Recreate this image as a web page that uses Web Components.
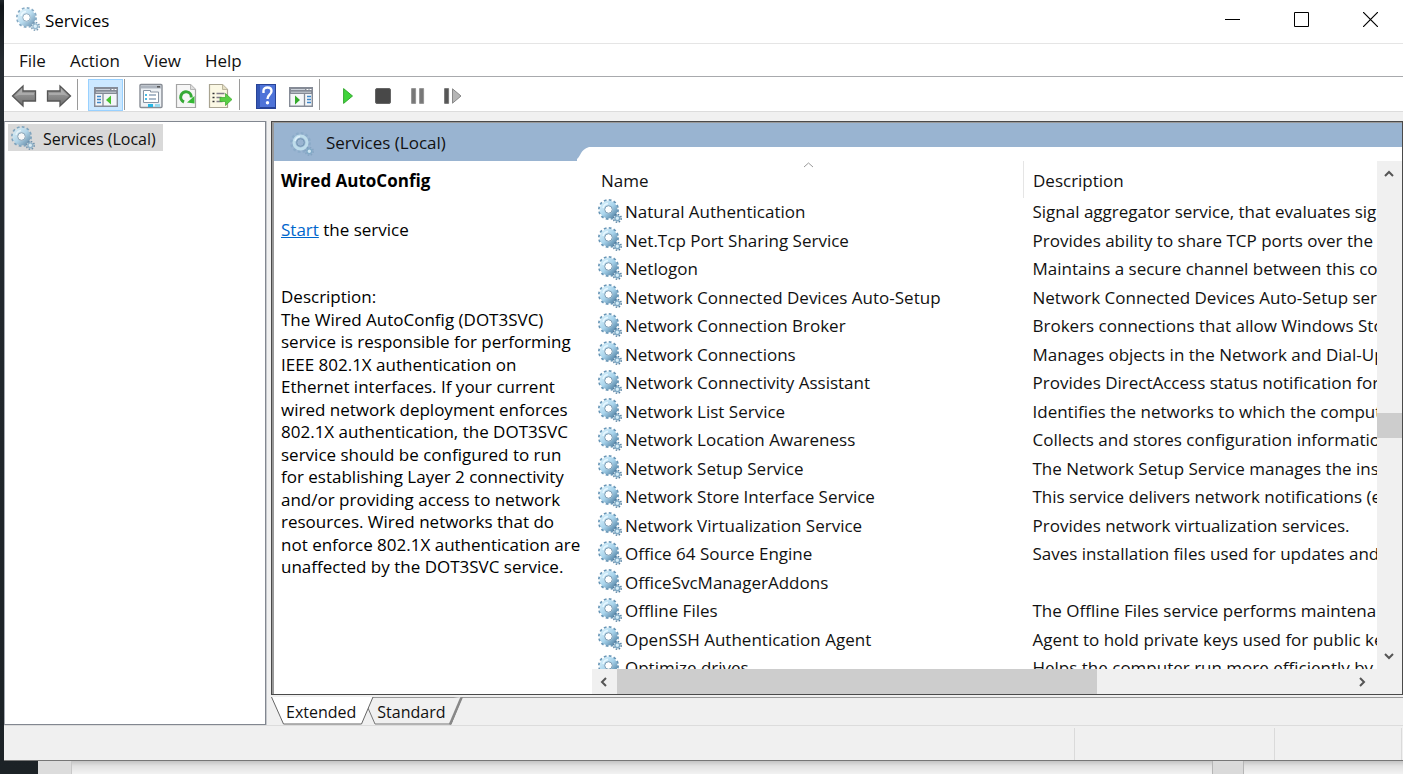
<!DOCTYPE html>
<html lang="en">
<head>
<meta charset="utf-8">
<title>Services</title>
<style>
html, body { margin: 0; height: 100%; }
body { font-family: "Open Sans", "Noto Sans", sans-serif; font-size: 17px; line-height: 22px; color: #111; overflow: hidden; }
</style>
</head>
<body>
<services-desktop></services-desktop>

<template id="t-desktop">
<style>
:host { display: flex; flex-direction: column; height: 100vh; padding-left: 4px; box-sizing: border-box; background: linear-gradient(#20262b, #101518 6px, #252b31 60px, #1c2226); }
services-window { flex: 1; min-height: 0; }
.behind { display: flex; height: 13px; margin-left: 34px; background: linear-gradient(#c4c4c4, #e2e2e2 5px, #f2f2f2); }
.a { width: 33px; border-right: 1px solid #c8c8c8; background: #dcdcdc; }
.b { flex: 1; }
.c { width: 30px; border: solid #b5b5b5; border-width: 0 1px; background: #dadada; }
.d { width: 159px; }
</style>
<services-window></services-window>
<div class="behind"><div class="a"></div><div class="b"></div><div class="c"></div><div class="d"></div></div>
</template>

<template id="t-window">
<style>
:host { display: flex; flex-direction: column; background: #f0f0f0; border-bottom: 1px solid #777; }
.body { flex: 1; min-height: 0; display: flex; gap: 4px; padding-top: 9px; }
console-tree { width: 262px; flex: none; }
.right { flex: 1; min-width: 0; display: flex; flex-direction: column; }
services-view { flex: 1; min-height: 0; }
</style>
<title-bar>Services</title-bar>
<menu-bar></menu-bar>
<tool-bar></tool-bar>
<div class="body">
<console-tree>Services (Local)</console-tree>
<div class="right"><services-view></services-view><view-tabs></view-tabs></div>
</div>
<status-bar></status-bar>
</template>

<template id="t-title">
<style>
:host { display: flex; align-items: center; height: 43px; background: #fff; border-bottom: 1px solid #e5e5e5; padding-left: 12px; color: #000; }
gear-icon { margin-bottom: 5px; }
h1 { flex: 1; margin: 0 0 2px 5px; font: inherit; }
button { width: 70px; height: 40px; padding: 0; border: 0; background: none; display: grid; place-items: center; margin-bottom: 4px; }
svg { display: block; stroke: #000; fill: none; }
.close { width: 66px; margin-left: 2px; }
.max { width: 68px; }
</style>
<gear-icon tone="light"></gear-icon>
<h1><slot></slot></h1>
<button aria-label="Minimize"><svg width="15" height="15"><path d="M0 7.500h15"/></svg></button>
<button class="max" aria-label="Maximize"><svg width="15" height="15"><path d="M.5.500h14v14H.5z"/></svg></button>
<button class="close" aria-label="Close"><svg width="15" height="15"><path d="M0 0l15 15M15 0L0 15" stroke-width="1.200"/></svg></button>
</template>

<template id="t-menu">
<style>
:host { display: flex; height: 32px; gap: 24px; padding-left: 15px; align-items: center; background: #fff; border-bottom: 1px solid #a8aaad; }
button { border: 0; background: none; padding: 2px 0 0; font: inherit; color: inherit; height: 32px; }
</style>
<button>File</button><button>Action</button><button>View</button><button>Help</button>
</template>

<template id="t-tool">
<style>
:host { display: flex; height: 34px; padding-left: 2px; align-items: center; background: #fff; border-bottom: 1px solid #dcdcdc; }
button { width: 35px; height: 32px; border: 0; padding: 3px 0 0; background: none; display: grid; place-items: center; box-sizing: border-box; margin-top: 1px; }
button[aria-pressed=true] { background: #cce8ff; border: 1px solid #99d1ff; }
i { width: 1px; height: 31px; margin: 0 8px 0 1px; background: #9a9a9a; }
i.wide { margin-right: 10px; }
svg { display: block; }
</style>
<button aria-label="Back"><svg width="26" height="24" viewBox="0 0 26 24"><path d="M1.500 12L12 2v5h12.500v10H12v5z" fill="url(#g)" stroke="#555" stroke-width="1.300"/><path d="M4 12l7-7v4h12v2H8z" fill="#bbb" opacity=".6"/><defs><linearGradient id="g" x2="0" y2="1"><stop stop-color="#aaa"/><stop offset="1" stop-color="#6c6c6c"/></linearGradient></defs></svg></button>
<button aria-label="Forward"><svg width="26" height="24" viewBox="0 0 26 24"><path d="M24.500 12L14 2v5H1.500v10H14v5z" fill="url(#h)" stroke="#555" stroke-width="1.300"/><path d="M22 12l-7-7v4H3v2h15z" fill="#bbb" opacity=".6"/><defs><linearGradient id="h" x2="0" y2="1"><stop stop-color="#aaa"/><stop offset="1" stop-color="#6c6c6c"/></linearGradient></defs></svg></button>
<i class="wide"></i>
<button aria-pressed="true" aria-label="Show or hide console tree"><svg width="24" height="22" viewBox="0 0 24 22"><path d="M.7 2.700h22.600v18.600H.7z" fill="#f4f6f8" stroke="#858b96" stroke-width="1.400"/><path d="M1 3h22v6H1z" fill="#858b96"/><path d="M2 4.500h14M2 7.200h20" stroke="#ccd2da"/><path d="M17.500 4.500h2M20.500 4.500h2" stroke="#fff"/><path d="M9 9v12" stroke="#858b96" stroke-width="1.300"/><path d="M3 11.500h4M3 14.500h4M3 17.500h4" stroke="#3d87c9" stroke-width="1.500"/><path d="M17 10.500v9l-5-4.500z" fill="#45c22f"/></svg></button>
<i></i>
<button aria-label="Properties"><svg width="24" height="26" viewBox="0 0 24 26"><rect x="1" y="1.500" width="22" height="23" rx="1" fill="#edf1f5" stroke="#878c94" stroke-width="1.400"/><path d="M2 4h20" stroke="#adb4be" stroke-width="3"/><path d="M18 3.800h3" stroke="#555" stroke-width="1.500"/><path d="M4.500 9V7.500h7V9h8v10.500h-15z" fill="#fff" stroke="#8793a2"/><path d="M6 12h2M6 16h2" stroke="#4bbae5" stroke-width="2"/><path d="M10 12h7M10 16h7" stroke="#8fa4ba" stroke-width="1.500"/><path d="M9 22.500h5" stroke="#26b7e5" stroke-width="3"/><path d="M16 22.500h5" stroke="#9ad8ed" stroke-width="3"/></svg></button>
<button aria-label="Refresh"><svg width="22" height="26" viewBox="0 0 22 26"><path d="M1.500 1.500h14l5 5v18h-19z" fill="#f6f6f6" stroke="#a4a4a4" stroke-width="1.200"/><path d="M15.500 1.500v5h5" fill="#ddd" stroke="#b7b7b7"/><path d="M9 19A5.300 5.300 0 1 1 16.300 14.500" fill="none" stroke="#35a935" stroke-width="3"/><path d="M12 19.500l7.500 1V13z" fill="#35b935"/></svg></button>
<button aria-label="Export list"><svg width="25" height="26" viewBox="0 0 25 26"><path d="M1.500 1.500h13l5 5v18h-18z" fill="#fbf8e4" stroke="#a9a491" stroke-width="1.200"/><path d="M14.500 1.500v5h5" fill="#e5dfc4" stroke="#bbb59d"/><path d="M4.500 10.500h2M4.500 14.500h2M4.500 18.500h2" stroke="#333" stroke-width="1.400"/><path d="M8.500 10.500h8M8.500 14.500h5M8.500 18.500h6" stroke="#817b88" stroke-width="1.300"/><path d="M12 14.500h5.500v-4L24 16.500l-6.500 6v-4H12z" fill="#59cf44" stroke="#39a82c" stroke-width=".7"/></svg></button>
<i></i>
<button aria-label="Help"><svg width="20" height="25" viewBox="0 0 20 25"><path d="M0 0h20v25H0z" fill="#274397"/><path d="M4 1h15v22H4z" fill="#4e73d8"/><path d="M1 1h3v23H1z" fill="#3457b6"/><path d="M7.500 9V6.500c0-4 8-4 8 .5 0 4-4 3.500-4 8" fill="none" stroke="#fff" stroke-width="2.400"/><circle cx="11.500" cy="18.800" r="1.700" fill="#fff"/></svg></button>
<button aria-label="Show or hide action pane"><svg width="24" height="22" viewBox="0 0 24 22"><path d="M.7 2.700h22.600v18.600H.7z" fill="#f4f6f8" stroke="#858b96" stroke-width="1.400"/><path d="M1 3h22v6H1z" fill="#858b96"/><path d="M2 4.500h14M2 7.200h20" stroke="#ccd2da"/><path d="M17.500 4.500h2M20.500 4.500h2" stroke="#fff"/><path d="M15.500 9v12" stroke="#858b96" stroke-width="1.300"/><path d="M18 11.500h4M18 14.500h4M18 17.500h4" stroke="#3d87c9" stroke-width="1.500"/><path d="M6 10.500v9l5-4.500z" fill="#35aa2b"/></svg></button>
<i class="wide"></i>
<button aria-label="Start service"><svg width="10" height="16" viewBox="0 0 10 16"><path d="M.6.600L9.500 8 .6 15.400z" fill="#3fd43a" stroke="#36a832"/></svg></button>
<button aria-label="Stop service"><svg width="16" height="16"><rect x=".5" y=".5" width="15" height="15" rx="1.500" fill="#484848" stroke="#666"/></svg></button>
<button aria-label="Pause service"><svg width="14" height="16"><path d="M.6.600h4v14.800h-4zM8.600.600h4v14.800h-4z" fill="#777" stroke="#949494"/></svg></button>
<button aria-label="Restart service"><svg width="18" height="16"><path d="M.6.600h4v14.800h-4z" fill="#555" stroke="#777"/><path d="M8.500.800L17 8l-8.500 7.200z" fill="#b5b5b5" stroke="#888"/></svg></button>
</template>

<template id="t-tree">
<style>
:host { display: block; background: #fff; border: 1px solid #828790; border-left-color: #a5a9b0; box-sizing: border-box; padding: 2px 3px; box-shadow: 1px 0 #c5c8cc; font-size: 16px; }
button { display: flex; align-items: center; height: 27px; width: 155px; border: 0; padding: 0 0 0 3px; background: #d9d9d9; font: inherit; color: inherit; white-space: nowrap; gap: 8px; }
div { display: flex; }
span { padding-top: 2px; }
</style>
<div role="tree"><button role="treeitem" aria-selected="true"><gear-icon tone="light"></gear-icon><span><slot></slot></span></button></div>
</template>

<template id="t-view">
<style>
:host { display: flex; flex-direction: column; background: #fff; border: 1px solid #4a4a4a; box-shadow: inset 2px 1px #999; padding: 1px 0 0 2px; margin-left: 1px; box-sizing: border-box; }
header { position: relative; display: flex; align-items: center; height: 38px; flex: none; padding-left: 16px; background: #99b4d1; gap: 12px; }
header svg { position: absolute; left: 303px; right: 0; bottom: 0; width: calc(100% - 303px); height: 14px; }
gear-icon { margin-top: 3px; }
h2 { font: inherit; margin: 2px 0 0; }
.panes { display: flex; flex: 1; min-height: 0; }
service-details { width: 318px; flex: none; }
service-list { flex: 1; min-width: 0; }
</style>
<header><gear-icon tone="pale"></gear-icon><h2>Services (Local)</h2><svg aria-hidden="true"><path d="M0 14V12C4 9 3 3 12 0H3000V14z" fill="#fff"/></svg></header>
<div class="panes"><service-details></service-details><service-list></service-list></div>
</template>

<template id="t-details">
<style>
:host { display: block; padding: 9px 0 0 7px; box-sizing: border-box; color: #000; white-space: nowrap; }
h3 { font-size: 17px; line-height: 22px; margin: 0; font-weight: 700; }
p { margin: 0; }
.start { margin: 27px 0 45px; }
a { color: #0066cc; text-decoration: underline; }
.text span { display: block; height: 22px; }
.text span:nth-child(odd) { height: 23px; }
</style>
<h3>Wired AutoConfig</h3>
<p class="start"><a href="#start">Start</a> the service</p>
<p class="text"><span>Description:</span><span>The Wired AutoConfig (DOT3SVC) </span><span>service is responsible for performing </span><span>IEEE 802.1X authentication on </span><span>Ethernet interfaces. If your current </span><span>wired network deployment enforces </span><span>802.1X authentication, the DOT3SVC </span><span>service should be configured to run </span><span>for establishing Layer 2 connectivity </span><span>and/or providing access to network </span><span>resources. Wired networks that do </span><span>not enforce 802.1X authentication are </span><span>unaffected by the DOT3SVC service.</span></p>
</template>

<template id="t-list">
<style>
:host { display: grid; grid-template: minmax(0, 1fr) 25px / minmax(0, 1fr) 25px; }
.rows { overflow: hidden; }
table { border-collapse: collapse; table-layout: fixed; width: 100%; }
th, td { padding: 0; text-align: left; font-weight: 400; white-space: nowrap; overflow: hidden; }
th { height: 34px; padding: 3px 0 0 9px; position: relative; }
th + th { border-left: 1px solid #e5e5e5; }
th svg { position: absolute; left: 211px; top: 1px; }
.name { width: 422px; }
td { height: 28px; }
tr:nth-child(even) td { height: 29px; }
td + td { padding-left: 9px; }
td div { display: flex; align-items: center; height: 28px; padding-left: 6px; gap: 3px; }
td gear-icon { margin-bottom: 3px; }
.v { grid-row: 1 / 3; grid-column: 2; display: flex; flex-direction: column; background: #f0f0f0; }
.h { display: flex; background: #f0f0f0; }
button { width: 25px; height: 25px; border: 0; padding: 0 2px 0 0; background: none; display: grid; place-items: center; flex: none; }
button svg { fill: none; stroke: #555; stroke-width: 2; }
.h .thumb { width: 480px; background: #cdcdcd; }
.h .space { flex: 1; }
.h button:last-child { padding-right: 6px; }
.v .before { flex: 226 0 0; }
.v .after { flex: 205 0 0; }
.v .thumb { height: 25px; background: #cdcdcd; }
.v button:last-child { margin-bottom: 26px; }
</style>
<div class="rows"><table><thead><tr><th class="name" scope="col">Name<svg width="11" height="6" fill="none" stroke="#999"><path d="M1 5l4.500-4L10 5"/></svg></th><th scope="col">Description</th></tr></thead><tbody></tbody></table></div>
<div class="v"><button aria-label="Scroll up"><svg width="10" height="8"><path d="M1 6l4-4 4 4"/></svg></button><div class="before"></div><div class="thumb"></div><div class="after"></div><button aria-label="Scroll down"><svg width="10" height="8"><path d="M1 2l4 4 4-4"/></svg></button></div>
<div class="h"><button aria-label="Scroll left"><svg width="8" height="10"><path d="M6 1L2 5l4 4"/></svg></button><div class="thumb"></div><div class="space"></div><button aria-label="Scroll right"><svg width="8" height="10"><path d="M2 1l4 4-4 4"/></svg></button></div>
</template>

<template id="t-tabs">
<style>
:host { display: flex; position: relative; height: 30px; padding-left: 16px; gap: 21px; align-items: center; font-size: 16px; }
:host::before { content: ""; position: absolute; left: 100px; right: 0; top: 2px; height: 1px; background: #999; }
svg { position: absolute; left: 0; top: 0; }
button { position: relative; border: 0; padding: 0; background: none; font: inherit; color: inherit; margin-top: 4px; height: 24px; line-height: 24px; }
</style>
<svg width="200" height="30" aria-hidden="true" fill="none" stroke="#666"><path d="M98 13l7 16h76l11-27" fill="#f0f0f0" stroke="#777"/><path d="M180 29.500l11.500-27" stroke="#888" stroke-width="2.500"/><path d="M1.500 2l12 27h78l11.500-27z" fill="#fff" stroke="none"/><path d="M1.500 2l12 27h78l11.500-27"/></svg>
<button role="tab" aria-selected="true">Extended</button><button role="tab" aria-selected="false">Standard</button>
</template>

<template id="t-status">
<style>
:host { display: flex; height: 34px; border-top: 1px solid #dcdcdc; background: #f0f0f0; }
div { border-right: 1px solid #dadada; margin-top: 2px; flex: 1; }
.s { flex: none; width: 199px; }
.e { flex: none; width: 126px; margin-right: 1px; }
</style>
<div></div><div class="s"></div><div class="e"></div>
</template>

<template id="t-gear">
<style>
:host { display: block; width: 24px; height: 24px; flex: none; }
:host([tone=light]) { opacity: .8; }
:host([tone=pale]) { opacity: .9; }
:host([tone=pale]) .teeth { opacity: .3; }
:host([tone=pale]) .hole { fill: #99b4d1; }
:host([tone=pale]) .body { stroke: #c3e2ee; stroke-width: 3; }
svg { display: block; }
.hole { fill: #fff; }
</style>
<svg width="24" height="24" viewBox="0 0 24 24" fill="none" aria-hidden="true"><defs><linearGradient id="m" x1="0" y1="0" x2="1" y2="1"><stop stop-color="#d3edf9"/><stop offset=".5" stop-color="#a9d4ec"/><stop offset="1" stop-color="#5d8cad"/></linearGradient></defs>
<circle class="teeth" cx="10.500" cy="10.500" r="9.200" stroke="#6a97b7" stroke-width="2.600" stroke-dasharray="2.600 2.218"/>
<circle class="body" cx="10.500" cy="10.500" r="6.500" stroke="url(#m)" stroke-width="5"/>
<circle class="hole" cx="10.500" cy="10.500" r="3.800" stroke="#6f95b0"/>
<path d="M5 9a6 6 0 0 1 5-4.500" stroke="#e6f7ff" stroke-width="1.600"/>
<circle class="teeth" cx="19.300" cy="19.300" r="3.900" stroke="#557f9f" stroke-width="1.600" stroke-dasharray="1.500 1.563"/>
<circle cx="19.300" cy="19.300" r="2.400" fill="#d6edf7" stroke="#7fa9c5" stroke-width="1.400"/></svg>
</template>

<script>
function define(name, templateId, setup) {
  customElements.define(name, class extends HTMLElement {
    constructor() {
      super();
      const root = this.attachShadow({ mode: "open" });
      root.append(document.getElementById(templateId).content.cloneNode(true));
      if (setup) setup(root);
    }
  });
}
const services = [
  ["Natural Authentication", "Signal aggregator service, that evaluates signals"],
  ["Net.Tcp Port Sharing Service", "Provides ability to share TCP ports over the net.tcp"],
  ["Netlogon", "Maintains a secure channel between this computer"],
  ["Network Connected Devices Auto-Setup", "Network Connected Devices Auto-Setup service"],
  ["Network Connection Broker", "Brokers connections that allow Windows Store"],
  ["Network Connections", "Manages objects in the Network and Dial-Up"],
  ["Network Connectivity Assistant", "Provides DirectAccess status notification for UI"],
  ["Network List Service", "Identifies the networks to which the computer"],
  ["Network Location Awareness", "Collects and stores configuration information"],
  ["Network Setup Service", "The Network Setup Service manages the installation"],
  ["Network Store Interface Service", "This service delivers network notifications (e.g."],
  ["Network Virtualization Service", "Provides network virtualization services."],
  ["Office 64 Source Engine", "Saves installation files used for updates and repairs"],
  ["OfficeSvcManagerAddons", ""],
  ["Offline Files", "The Offline Files service performs maintenance"],
  ["OpenSSH Authentication Agent", "Agent to hold private keys used for public key"],
  ["Optimize drives", "Helps the computer run more efficiently by optimizing"]
];
define("gear-icon", "t-gear");
define("title-bar", "t-title");
define("menu-bar", "t-menu");
define("tool-bar", "t-tool");
define("console-tree", "t-tree");
define("service-details", "t-details");
define("service-list", "t-list", root => {
  const body = root.querySelector("tbody");
  for (const [name, description] of services) {
    const row = body.insertRow();
    const cell = document.createElement("div");
    cell.append(document.createElement("gear-icon"), Object.assign(document.createElement("span"), { textContent: name }));
    row.insertCell().append(cell);
    row.insertCell().textContent = description;
  }
});
define("services-view", "t-view");
define("view-tabs", "t-tabs");
define("status-bar", "t-status");
define("services-window", "t-window");
define("services-desktop", "t-desktop");
</script>
</body>
</html>
